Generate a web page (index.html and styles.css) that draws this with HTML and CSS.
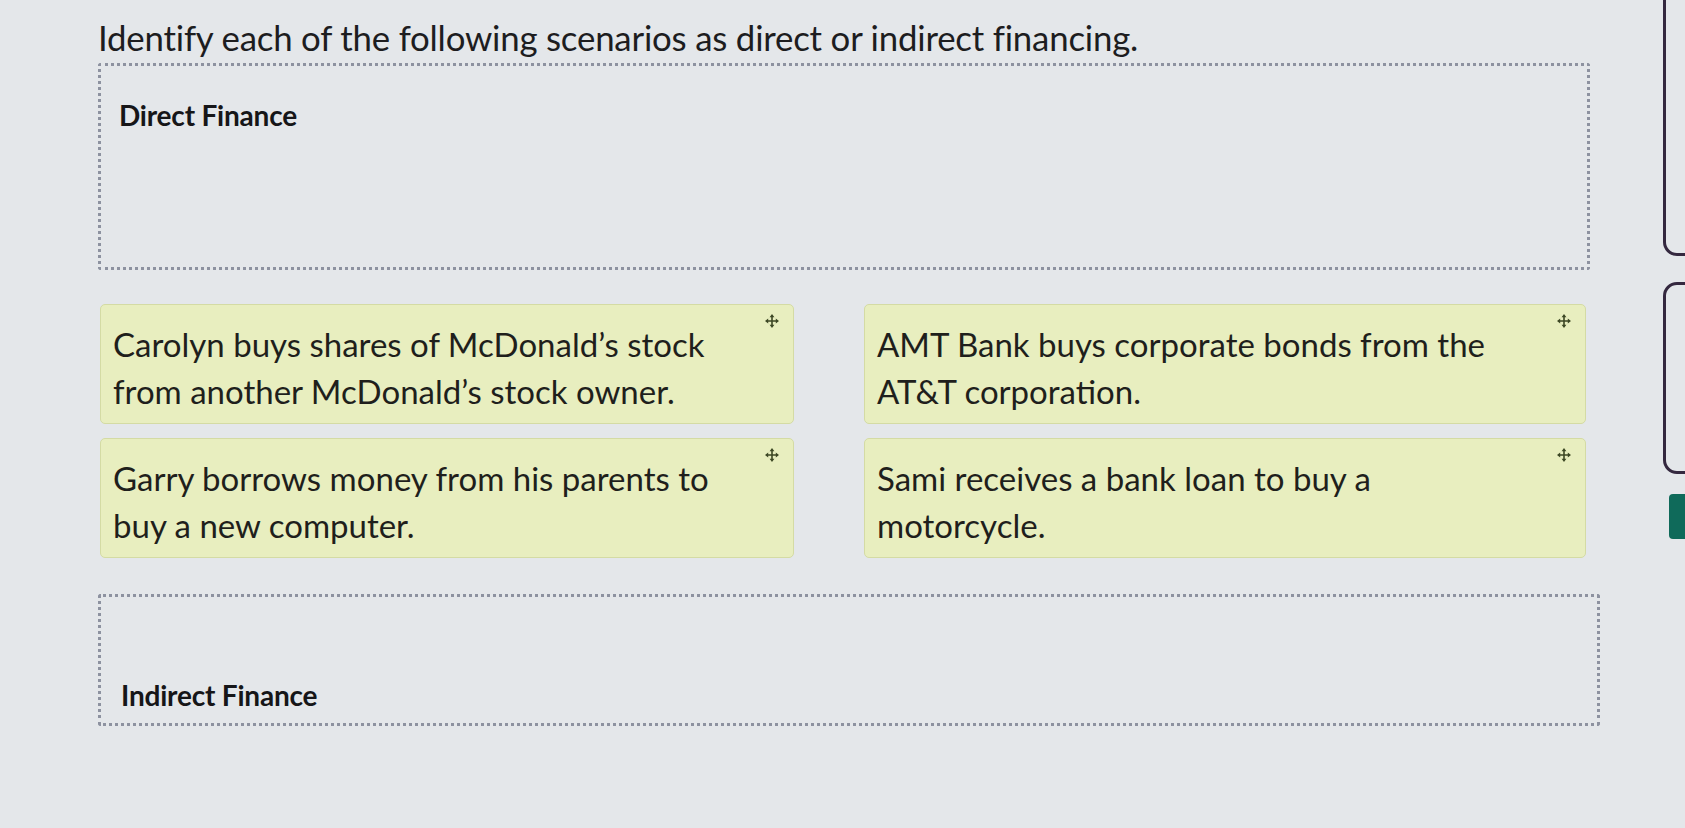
FILE: index.html
```html
<!DOCTYPE html>
<html lang="en">
<head>
<meta charset="utf-8">
<title>Direct or indirect financing</title>
<link rel="stylesheet" href="styles.css">
</head>
<body>
<div class="page">
  <main class="main">
    <h1 class="title">Identify each of the following scenarios as direct or indirect financing.</h1>

    <section class="zone zone-top">
      <div class="zone-label">Direct Finance</div>
    </section>

    <section class="cards">
      <div class="card card-l1">
        <p class="card-text">Carolyn buys shares of McDonald’s stock from another McDonald’s stock owner.</p>
        <svg class="move" viewBox="0 0 14 14" width="14" height="14"><path d="M7 2V12M2 7H12" stroke="#3c4724" stroke-width="1.6"/><path d="M7 0L4.6 3.2H9.4Z M7 14L4.6 10.8H9.4Z M0 7L3.2 4.6V9.4Z M14 7L10.8 4.6V9.4Z" fill="#3c4724"/></svg>
      </div>
      <div class="card card-r1">
        <p class="card-text">AMT Bank buys corporate bonds from the AT&amp;T corporation.</p>
        <svg class="move" viewBox="0 0 14 14" width="14" height="14"><path d="M7 2V12M2 7H12" stroke="#3c4724" stroke-width="1.6"/><path d="M7 0L4.6 3.2H9.4Z M7 14L4.6 10.8H9.4Z M0 7L3.2 4.6V9.4Z M14 7L10.8 4.6V9.4Z" fill="#3c4724"/></svg>
      </div>
      <div class="card card-l2">
        <p class="card-text">Garry borrows money from his parents to buy a new computer.</p>
        <svg class="move" viewBox="0 0 14 14" width="14" height="14"><path d="M7 2V12M2 7H12" stroke="#3c4724" stroke-width="1.6"/><path d="M7 0L4.6 3.2H9.4Z M7 14L4.6 10.8H9.4Z M0 7L3.2 4.6V9.4Z M14 7L10.8 4.6V9.4Z" fill="#3c4724"/></svg>
      </div>
      <div class="card card-r2">
        <p class="card-text">Sami receives a bank loan to buy a motorcycle.</p>
        <svg class="move" viewBox="0 0 14 14" width="14" height="14"><path d="M7 2V12M2 7H12" stroke="#3c4724" stroke-width="1.6"/><path d="M7 0L4.6 3.2H9.4Z M7 14L4.6 10.8H9.4Z M0 7L3.2 4.6V9.4Z M14 7L10.8 4.6V9.4Z" fill="#3c4724"/></svg>
      </div>
    </section>

    <section class="zone zone-bottom">
      <div class="zone-label">Indirect Finance</div>
    </section>
  </main>

  <aside class="side">
    <div class="side-box side-box1"><span class="side-inner"></span><span class="side-dot"></span></div>
    <div class="side-box side-box2"></div>
    <div class="side-btn"></div>
  </aside>
</div>
</body>
</html>
```

FILE: styles.css
```css
* { box-sizing: border-box; }

html, body {
  margin: 0;
  padding: 0;
  height: 100%;
  overflow: hidden;
}

body {
  background: #e4e7ea;
  font-family: "Lato", "Open Sans", "Liberation Sans", sans-serif;
  color: #1d1d1f;
}

.page {
  display: flex;
  width: 1685px;
  height: 828px;
}

.main {
  width: 1502px;
  margin-left: 98px;
  display: flex;
  flex-direction: column;
}

.title {
  margin: 17px 0 0 0;
  font-size: 34.8px;
  line-height: 42px;
  font-weight: 400;
  letter-spacing: -0.2px;
}

.zone {
  border: 3px dotted #8d92a0;
  border-radius: 3px;
  display: flex;
  flex-direction: column;
}

.zone-top {
  margin-top: 4px;
  width: 1492px;
  height: 207px;
  padding: 32px 0 0 18px;
}

.zone-bottom {
  margin-top: 36px;
  width: 1502px;
  height: 132px;
  padding: 0 0 11px 20px;
  justify-content: flex-end;
}

.zone-label {
  font-weight: 700;
  font-size: 28px;
  line-height: 34px;
  color: #161618;
  letter-spacing: -0.2px;
}

.cards {
  margin-top: 34px;
  width: 1488px;
  display: grid;
  grid-template-columns: 694px 722px;
  column-gap: 70px;
  row-gap: 14px;
  margin-left: 2px;
}

.card {
  position: relative;
  height: 120px;
  background: #e8eebf;
  border: 1px solid #d4dba4;
  border-radius: 5px;
  padding: 16px 80px 0 12px;
}

.card-text {
  margin: 0;
  font-size: 33px;
  line-height: 47px;
  color: #1f1f1c;
}

.move {
  position: absolute;
  top: 9px;
  right: 14px;
}

.side {
  margin-left: auto;
  width: 22px;
  overflow: hidden;
  display: flex;
  flex-direction: column;
}

.side-box {
  width: 60px;
  border: 3px solid #34283f;
  border-radius: 14px;
  position: relative;
}

.side-box1 {
  margin-top: -20px;
  height: 276px;
}

.side-box2 {
  margin-top: 26px;
  height: 192px;
}

.side-inner {
  position: absolute;
  left: 28px;
  top: 75px;
  width: 3px;
  height: 150px;
  background: #34283f;
}

.side-dot {
  position: absolute;
  left: 27px;
  top: 212px;
  width: 6px;
  height: 10px;
  border-radius: 3px;
  background: #4caf6a;
}

.side-btn {
  margin-top: 20px;
  margin-left: 6px;
  width: 40px;
  height: 45px;
  border-radius: 4px;
  background: #0f6a5a;
}
```
